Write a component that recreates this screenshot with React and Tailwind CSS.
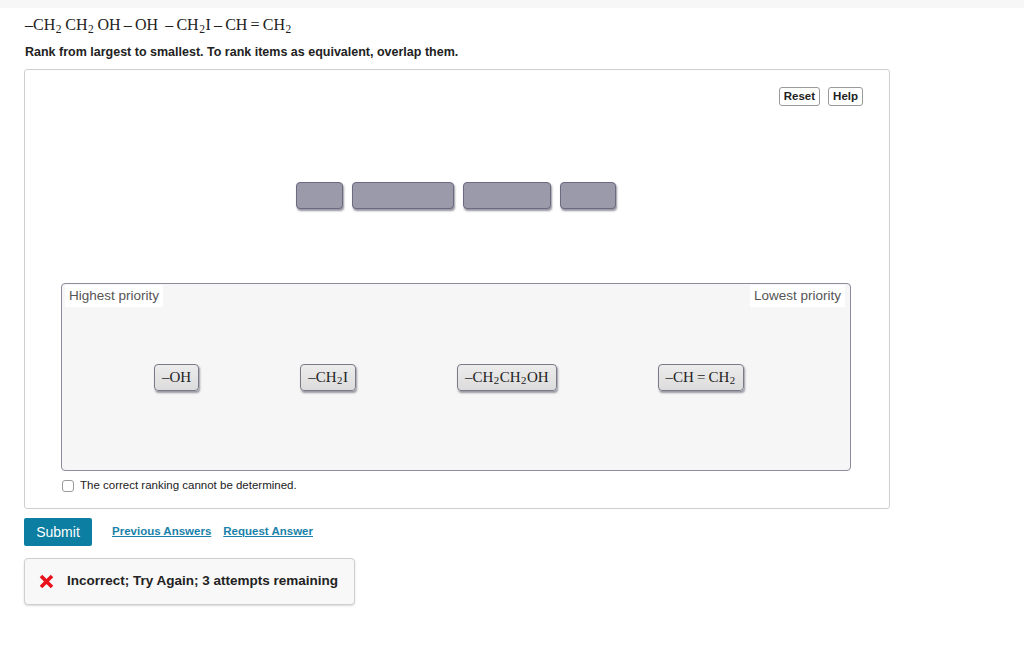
import React from "react";

const serif = { fontFamily: '"Liberation Serif", "Times New Roman", serif' };

function Sub({ children }) {
  return <span className="inline-block text-[0.72em] translate-y-[0.3em] leading-none px-[0.5px]">{children}</span>;
}

function Item({ children }) {
  return (
    <div
      className="h-[27px] px-[7px] flex items-center rounded-[4px] border border-[#7a7a88] bg-gradient-to-b from-[#ececec] to-[#dcdcdc] shadow-[1px_2px_2px_rgba(60,60,80,0.5)] text-[15px] text-[#222] whitespace-nowrap"
      style={serif}
    >
      {children}
    </div>
  );
}

function Slot({ w }) {
  return (
    <div
      className={`h-[27px] ${w} rounded-[4px] border border-[#6b6a80] bg-[#9b9aab] shadow-[1px_2px_2px_rgba(60,60,80,0.55)]`}
    />
  );
}

export default function App() {
  const sans = { fontFamily: '"Liberation Sans", Arial, Helvetica, sans-serif' };
  return (
    <div className="w-[1024px] h-[647px] bg-white text-[#222]" style={sans}>
      <div className="h-[8px] bg-[#f7f7f7]" />
      <div className="pl-[25px]">
        <div className="h-[32px] pt-[5px] text-[16px] text-[#222] whitespace-nowrap" style={serif}>
          –CH<Sub>2</Sub>&thinsp;CH<Sub>2</Sub>&thinsp;OH&thinsp;–&thinsp;OH &thinsp;–&thinsp;CH<Sub>2</Sub>I&thinsp;–&thinsp;CH&thinsp;=&thinsp;CH<Sub>2</Sub>
        </div>
        <div className="h-[29px] pt-[3px] text-[12.5px] font-bold text-[#222]">
          Rank from largest to smallest. To rank items as equivalent, overlap them.
        </div>
      </div>

      <div className="ml-[24px] w-[866px] h-[440px] border border-[#cfcfcf] rounded-[3px] bg-white flex flex-col">
        <div className="flex justify-end gap-[8px] pr-[26px] pt-[17px]">
          <button className="h-[19px] px-[4px] text-[11.5px] font-bold border border-[#9a9a9a] rounded-[3px] bg-white leading-none">Reset</button>
          <button className="h-[19px] px-[4px] text-[11.5px] font-bold border border-[#9a9a9a] rounded-[3px] bg-white leading-none">Help</button>
        </div>
        <div className="flex justify-center gap-[9px] mt-[76px] pr-[2px]">
          <Slot w="w-[47px]" />
          <Slot w="w-[102px]" />
          <Slot w="w-[88px]" />
          <Slot w="w-[56px]" />
        </div>
        <div className="ml-[36px] w-[790px] mt-[74px] h-[188px] border border-[#8c8ca0] rounded-[4px] bg-[#f6f6f6] relative flex items-center gap-[101px] pl-[92px]">
          <div className="absolute left-[3px] top-[1px] bg-white px-[4px] py-[1px] text-[13.5px] text-[#555]">Highest priority</div>
          <div className="absolute right-[5px] top-[1px] bg-white px-[4px] py-[1px] text-[13.5px] text-[#555]">Lowest priority</div>
          <Item>–OH</Item>
          <Item>–CH<Sub>2</Sub>I</Item>
          <Item>–CH<Sub>2</Sub>CH<Sub>2</Sub>OH</Item>
          <Item>–CH&thinsp;=&thinsp;CH<Sub>2</Sub></Item>
        </div>
        <div className="flex items-center mt-[6px] ml-[37px] gap-[6px]">
          <div className="w-[12px] h-[12px] rounded-[3px] border border-[#9a9a9a] bg-white" />
          <span className="text-[11.5px] text-[#222]">The correct ranking cannot be determined.</span>
        </div>
      </div>

      <div className="flex items-center ml-[24px] mt-[9px] gap-[20px]">
        <button className="w-[68px] h-[28px] bg-[#0b7ea1] rounded-[2px] text-white text-[14px]">Submit</button>
        <div className="flex gap-[12px] text-[11.5px] font-bold text-[#1a82aa] underline">
          <span>Previous Answers</span>
          <span>Request Answer</span>
        </div>
      </div>

      <div className="ml-[24px] mt-[12px] w-[331px] h-[47px] border border-[#cfcfcf] rounded-[4px] bg-[#f8f8f8] shadow-[0_1px_2px_rgba(0,0,0,0.15)] flex items-center pl-[14px] gap-[13px]">
        <svg width="15" height="15" viewBox="0 0 15 15">
          <path d="M2 2 L13 13 M13 2 L2 13" stroke="#e8101a" strokeWidth="3.6" strokeLinecap="butt" />
        </svg>
        <span className="text-[13.5px] font-bold text-[#222]">Incorrect; Try Again; 3 attempts remaining</span>
      </div>
    </div>
  );
}
